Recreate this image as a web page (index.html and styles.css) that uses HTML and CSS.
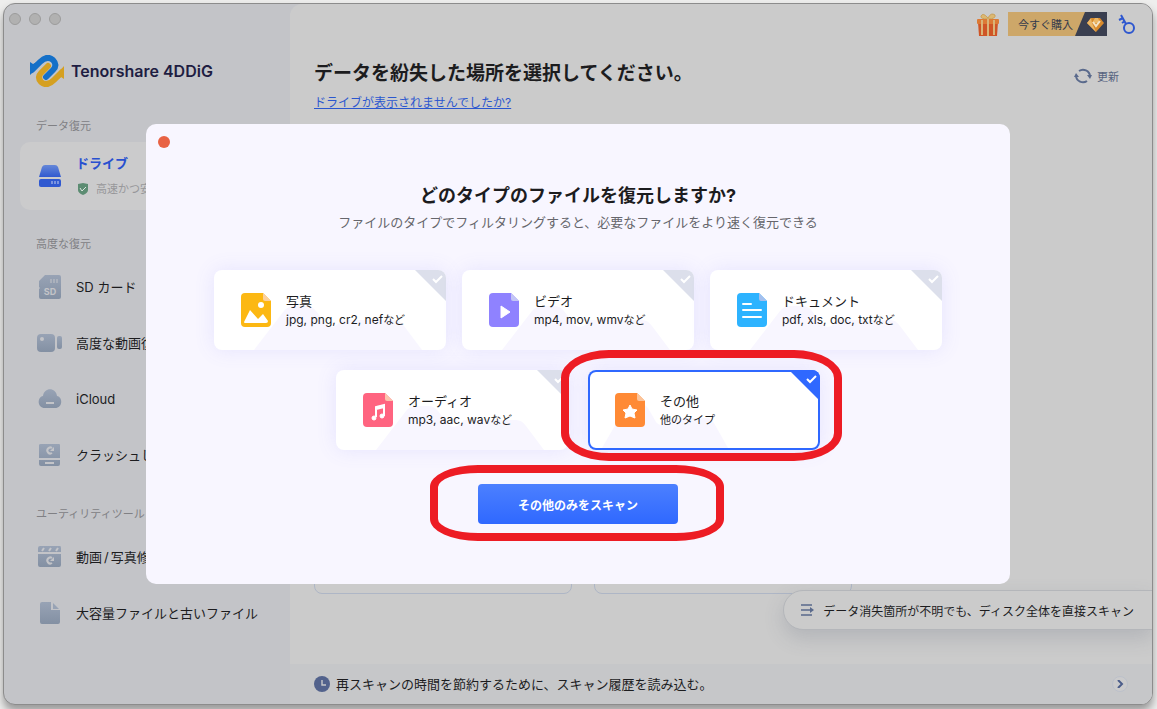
FILE: index.html
```html
<!DOCTYPE html>
<html lang="ja">

<head>

    <meta charset="utf-8">
    <meta name="viewport" content="width=device-width, initial-scale=1.0">

    <title>Tenorshare 4DDiG</title>
    <link rel="stylesheet" href="styles.css">

</head>

<body>

<!-- 共通パーツ -->
<svg class="defs" width="0" height="0" aria-hidden="true">
    <defs>
        <linearGradient id="grey" x1="0" y1="0" x2="0" y2="1">
            <stop offset="0" stop-color="#98a3b5"/>
            <stop offset="1" stop-color="#8390a3"/>
        </linearGradient>
        <linearGradient id="blue" x1="0" y1="0" x2="0" y2="1">
            <stop offset="0" stop-color="#6587d8"/>
            <stop offset="1" stop-color="#3059d0"/>
        </linearGradient>
    </defs>
    <symbol id="hill" viewBox="0 0 168 48" preserveAspectRatio="none">
        <path d="M0 48L30 9Q34 4 40 4H52Q58 4 62 9L72 22Q78 28 84 22L88 18H140Q146 18 150 24L168 48Z" fill="#f8f6ff"/>
    </symbol>
    <symbol id="tick" viewBox="0 0 11 9">
        <path d="M1 4L4 7L10 1" fill="none" stroke="#fff" stroke-width="2"/>
    </symbol>
</svg>

<div class="window">

    <aside class="sidebar">
        <div class="lights">
            <span></span><span></span><span></span>
        </div>
        <div class="brand">
            <svg width="34" height="32" viewBox="0 0 34 32" fill="none" stroke-width="6">
                <path d="M0 7L3 9L7 7V13L0 20Z" fill="#1570c8"/>
                <path d="M2 15L10 7Q17 0 23 5Q28 10 23 15L16 22" stroke="#1570c8" stroke-linecap="round"/>
                <path d="M34 11L27 19V25L31 22L34 24Z" fill="#d5a021"/>
                <path d="M32 17L24 25Q17 32 11 27Q7 22 11 18L18 11" stroke="#d5a021" stroke-linecap="round"/>
            </svg>
            <span>Tenorshare 4DDiG</span>
        </div>

        <nav>
            <div class="group">
                <h2>データ復元</h2>
                <a class="item active" href="#">
                    <svg width="28" height="24" viewBox="0 0 28 24">
                        <path d="M7 1H17Q19 1 20 3L23 13H1L4 3Q5 1 7 1Z" fill="url(#blue)" transform="translate(2 0)"/>
                        <rect x="3" y="15" width="22" height="8" rx="2" fill="#3059d0"/>
                        <path d="M16 17v3M19 17v3M22 17v3" stroke="#c5d0ef"/>
                    </svg>
                    <span class="texts">
                        <b>ドライブ</b>
                        <small>
                            <svg width="12" height="12" viewBox="0 0 12 12">
                                <path d="M6 0L11 1V7Q11 10 6 12Q1 10 1 7V1Z" fill="#5c8c72"/>
                                <path d="M3 5L5 8L9 4" fill="none" stroke="#dce5df" stroke-width="1"/>
                            </svg>
                            高速かつ安全
                        </small>
                    </span>
                </a>
            </div>

            <div class="group">
                <h2>高度な復元</h2>
                <a class="item" href="#">
                    <svg width="28" height="24" viewBox="0 0 28 24">
                        <path d="M9 0H23Q25 0 25 2V22Q25 24 23 24H5Q3 24 3 22V14L4 13L3 12V6Z" fill="url(#grey)"/>
                        <path d="M15 4v4M18 4v4M21 4v4" stroke="#c3c4c8"/>
                        <text x="14" y="20" class="sd">SD</text>
                    </svg>
                    <span>SD カード</span>
                </a>
                <a class="item" href="#">
                    <svg width="28" height="24" viewBox="0 0 28 24">
                        <rect x="1" y="3" width="18" height="18" rx="4" fill="url(#grey)"/>
                        <rect x="21" y="5" width="5" height="13" rx="2" fill="url(#grey)"/>
                        <circle cx="6" cy="8" r="2" fill="#c3c4c8"/>
                    </svg>
                    <span>高度な動画復元</span>
                </a>
                <a class="item" href="#">
                    <svg width="28" height="24" viewBox="0 0 28 24">
                        <path d="M9 21C1 21 1 10 7 9C8 0 20 0 21 9C27 10 27 21 19 21Z" fill="url(#grey)"/>
                        <path d="M10 16h8" stroke="#c3c4c8" stroke-width="2"/>
                    </svg>
                    <span>iCloud</span>
                </a>
                <a class="item" href="#">
                    <svg width="28" height="24" viewBox="0 0 28 24">
                        <path d="M5 1H23Q24 1 24 2V15H3V2Q3 1 5 1ZM3 17H24V21Q24 23 22 23H5Q3 23 3 21Z" fill="url(#grey)"/>
                        <path d="M16 5A3 3 0 1 0 16 10" fill="none" stroke="#c3c4c8" stroke-width="2"/>
                        <path d="M14 8h4v-4z" fill="#c3c4c8"/>
                        <path d="M9 20h9" stroke="#c3c4c8" stroke-width="2"/>
                    </svg>
                    <span>クラッシュした PC</span>
                </a>
            </div>

            <div class="group">
                <h2>ユーティリティツール</h2>
                <a class="item" href="#">
                    <svg width="28" height="24" viewBox="0 0 28 24">
                        <path d="M4 1H24Q25 1 25 3V7H2V3Q2 1 4 1ZM2 9H25V20Q25 22 23 22H4Q2 22 2 20Z" fill="url(#grey)"/>
                        <path d="M6 6l2-3M13 6l2-3M20 6l2-3" stroke="#c3c4c8" stroke-width="2"/>
                        <path d="M16 13A3 3 0 1 0 16 18" fill="none" stroke="#c3c4c8" stroke-width="2"/>
                        <path d="M14 16h4v-4z" fill="#c3c4c8"/>
                    </svg>
                    <span>動画<i>/</i>写真修復</span>
                </a>
                <a class="item" href="#">
                    <svg width="28" height="24" viewBox="0 0 28 24">
                        <path d="M6 1H15V9H24V21Q24 23 22 23H6Q4 23 4 21V3Q4 1 6 1Z" fill="url(#grey)"/>
                        <path d="M17 2L23 8H17Z" fill="#98a3b5"/>
                    </svg>
                    <span>大容量ファイルと古いファイル</span>
                </a>
            </div>
        </nav>
    </aside>

    <main class="main">
        <header class="topbar">
            <svg width="24" height="24" viewBox="0 0 24 24">
                <path d="M12 7Q4 7 5 4Q7 0 12 6Q15 0 19 3Q20 7 12 7Z" fill="#dcb872" stroke="#c9a05a"/>
                <path d="M2 10H22L21 24H3Z" fill="#cf5526"/>
                <rect x="1" y="7" width="22" height="5" rx="1" fill="#dc7a35"/>
                <path d="M6 8V23M12 7V24M18 8V23" stroke="#d9b478" stroke-width="2"/>
            </svg>
            <button type="button" class="buy">
                <span>今すぐ購入</span>
                <svg width="32" height="24" viewBox="0 0 32 24">
                    <path d="M10 0H32V24H0Z" fill="#3a3f50"/>
                    <path d="M16 6H25L29 11L21 20L12 11Z" fill="#d98a2b"/>
                    <path d="M16 6L17 11L21 20L12 11ZM20 6H23L25 11H17Z" fill="#ecb765"/>
                    <path d="M18 10L21 14L25 9" fill="none" stroke="#f3e3c4" stroke-width="2"/>
                </svg>
            </button>
            <button type="button" class="key" aria-label="登録">
                <svg width="18" height="24" viewBox="0 0 18 24" fill="none" stroke="#2e57cf" stroke-width="2">
                    <circle cx="11" cy="16" r="5"/>
                    <path d="M8 12L3 3M1 8L5 6M4 11L7 9"/>
                </svg>
            </button>
        </header>

        <section class="content">
            <div class="heading">
                <div>
                    <h1>データを紛失した場所を選択してください。</h1>
                    <a href="#">ドライブが表示されませんでしたか?</a>
                </div>
                <button type="button" class="refresh">
                    <svg width="18" height="16" viewBox="0 0 18 16" fill="none" stroke="#5a6a8c" stroke-width="2">
                        <path d="M5 3A7 7 0 0 1 16 8M13 13A7 7 0 0 1 2 8"/>
                        <path d="M0 9L2 5L5 9ZM13 7L16 11L18 7Z" fill="#5a6a8c" stroke="none"/>
                    </svg>
                    更新
                </button>
            </div>
            <div class="drives">
                <div class="drive"></div>
                <div class="drive"></div>
            </div>
            <button type="button" class="pill">
                <svg width="14" height="14" viewBox="0 0 14 14" fill="none" stroke="#5a6a8c" stroke-width="1">
                    <path d="M1 2H12M1 7H12M1 12H12" stroke-width="1.4"/>
                    <path d="M10 4L14 7L10 10Z" fill="#5a6a8c" stroke="none"/>
                </svg>
                データ消失箇所が不明でも、ディスク全体を直接スキャン
            </button>
        </section>

        <footer class="history">
            <svg width="16" height="16" viewBox="0 0 16 16">
                <circle cx="8" cy="8" r="8" fill="#52628c"/>
                <path d="M8 4V9H12" fill="none" stroke="#c6c7c9" stroke-width="1.4"/>
            </svg>
            <span>再スキャンの時間を節約するために、スキャン履歴を読み込む。</span>
            <button type="button" aria-label="開く">
                <svg width="8" height="8" viewBox="0 0 8 8">
                    <path d="M2 0L6 4L2 8" fill="none" stroke="#4b5d8a" stroke-width="2"/>
                </svg>
            </button>
        </footer>
    </main>

    <div class="overlay">
        <form class="modal" role="dialog" aria-labelledby="modal-title">
            <button type="button" class="close" aria-label="閉じる"></button>
            <h2 id="modal-title">どのタイプのファイルを復元しますか?</h2>
            <p>ファイルのタイプでフィルタリングすると、必要なファイルをより速く復元できる</p>

            <div class="types">
                <label class="type">
                    <svg class="hill"><use href="#hill"/></svg>
                    <svg class="file" width="30" height="34" viewBox="0 0 30 34">
                        <path d="M4 0H22L30 8V30Q30 34 26 34H4Q0 34 0 30V4Q0 0 4 0Z" fill="#fcb813"/>
                        <path d="M22 0L30 8H24Q22 8 22 6Z" fill="#fbd0a0"/>
                        <circle cx="20" cy="12" r="3" fill="#fff"/>
                        <path d="M3 29L9 17L17 26L22 21L27 28Q27 30 25 30H4Q3 30 3 29Z" fill="#fff"/>
                    </svg>
                    <span class="name"><b>写真</b><small>jpg, png, cr2, nef<i>など</i></small></span>
                    <input type="checkbox"><svg class="tick"><use href="#tick"/></svg>
                </label>
                <label class="type">
                    <svg class="hill"><use href="#hill"/></svg>
                    <svg class="file" width="30" height="34" viewBox="0 0 30 34">
                        <path d="M4 0H22L30 8V30Q30 34 26 34H4Q0 34 0 30V4Q0 0 4 0Z" fill="#8f82ff"/>
                        <path d="M22 0L30 8H24Q22 8 22 6Z" fill="#c3c5f5"/>
                        <path d="M12 13L21 19L12 25Z" fill="#fff" stroke="#fff" stroke-width="1" stroke-linejoin="round"/>
                    </svg>
                    <span class="name"><b>ビデオ</b><small>mp4, mov, wmv<i>など</i></small></span>
                    <input type="checkbox"><svg class="tick"><use href="#tick"/></svg>
                </label>
                <label class="type">
                    <svg class="hill"><use href="#hill"/></svg>
                    <svg class="file" width="30" height="34" viewBox="0 0 30 34">
                        <path d="M4 0H22L30 8V30Q30 34 26 34H4Q0 34 0 30V4Q0 0 4 0Z" fill="#2db3ff"/>
                        <path d="M22 0L30 8H24Q22 8 22 6Z" fill="#a5bfed"/>
                        <path d="M6 11H14M6 17H24M6 24H24" stroke="#fff" stroke-width="2" stroke-linecap="round"/>
                    </svg>
                    <span class="name"><b>ドキュメント</b><small>pdf, xls, doc, txt<i>など</i></small></span>
                    <input type="checkbox"><svg class="tick"><use href="#tick"/></svg>
                </label>
            </div>
            <div class="types last">
                <label class="type">
                    <svg class="hill"><use href="#hill"/></svg>
                    <svg class="file" width="30" height="34" viewBox="0 0 30 34">
                        <path d="M4 0H22L30 8V30Q30 34 26 34H4Q0 34 0 30V4Q0 0 4 0Z" fill="#ff6480"/>
                        <path d="M22 0L30 8H24Q22 8 22 6Z" fill="#fcc4ad"/>
                        <path d="M13 24V14L21 12V23M13 16L21 14" fill="none" stroke="#fff" stroke-width="2"/>
                        <circle cx="11" cy="25" r="2" fill="#fff" stroke="#fff"/>
                        <circle cx="19" cy="23" r="2" fill="#fff" stroke="#fff"/>
                    </svg>
                    <span class="name"><b>オーディオ</b><small>mp3, aac, wav<i>など</i></small></span>
                    <input type="checkbox"><svg class="tick"><use href="#tick"/></svg>
                </label>
                <label class="type selected">
                    <svg class="hill"><use href="#hill"/></svg>
                    <svg class="file" width="30" height="34" viewBox="0 0 30 34">
                        <path d="M4 0H22L30 8V30Q30 34 26 34H4Q0 34 0 30V4Q0 0 4 0Z" fill="#ff8a35"/>
                        <path d="M22 0L30 8H24Q22 8 22 6Z" fill="#fcc49a"/>
                        <path d="M15 12L17 16L22 17L19 20L20 25L15 23L10 25L11 20L8 17L13 16Z" fill="#fff" stroke="#fff" stroke-linejoin="round"/>
                    </svg>
                    <span class="name"><b>その他</b><small><i>他のタイプ</i></small></span>
                    <input type="checkbox" checked><svg class="tick"><use href="#tick"/></svg>
                    <span class="ring"></span>
                </label>
            </div>

            <div class="action">
                <button type="submit">その他のみをスキャン</button>
                <span class="ring"></span>
            </div>
        </form>
    </div>

</div>

</body>

</html>
```

FILE: styles.css
```css
*{
    box-sizing:border-box;
}
body{
    margin:0;
    min-height:100vh;
    padding:3px 4px 4px 3px;
    display:flex;
    overflow:hidden;
    background:#eeeeed;
    font-family:Inter, "Noto Sans CJK JP", sans-serif;
    font-size:13px;
    line-height:20px;
    color:#1c1c1e;
}
h1, h2, p{
    margin:0;
}
button{
    border:0;
    padding:0;
    background:none;
    font-family:inherit;
    color:inherit;
    cursor:pointer;
}
i{
    font-style:normal;
}
svg{
    display:block;
    flex:none;
}
.defs{
    position:absolute;
}
.window{
    position:relative;
    flex:1;
    display:flex;
    overflow:hidden;
    border:1px solid #8c8c8c;
    border-radius:12px;
    background:#c3c4c8;
    box-shadow:0 6px 8px #999;
}

/* サイドバー */
.sidebar{
    width:286px;
    flex:none;
    white-space:nowrap;
}
.lights{
    display:flex;
    gap:8px;
    padding:9px 5px;
}
.lights span{
    width:12px;
    height:12px;
    border:1px solid #9c9c9c;
    border-radius:50%;
    background:#b1b1b1;
}
.brand{
    display:flex;
    align-items:center;
    gap:7px;
    height:32px;
    margin:21px 0 31px 26px;
    font-size:16px;
    font-weight:600;
    color:#1e1d42;
}
.group{
    margin-bottom:23px;
}
.group h2{
    margin:0 0 7px 32px;
    font-size:11px;
    line-height:16px;
    font-weight:400;
    color:#808084;
}
.item{
    display:flex;
    align-items:center;
    gap:12px;
    height:56px;
    padding-left:32px;
    color:inherit;
    text-decoration:none;
}
.item i{
    margin:0 2px;
}
.item.active{
    height:68px;
    margin:8px 16px 26px;
    padding-left:16px;
    border-radius:10px;
    background:#cbcbcc;
}
.texts b{
    display:block;
    margin-bottom:6px;
    color:#2850d0;
}
.texts small{
    display:flex;
    align-items:center;
    gap:7px;
    padding-left:1px;
    font-size:11px;
    color:#97979a;
}
.sd{
    font-size:9px;
    font-weight:700;
    text-anchor:middle;
    fill:#c3c4c8;
}

/* メイン */
.main{
    flex:1;
    display:flex;
    flex-direction:column;
    border-top-left-radius:12px;
    background:#cbcbcb;
}
.topbar{
    display:flex;
    justify-content:flex-end;
    padding:8px 16px 0 0;
}
.buy{
    display:flex;
    align-items:center;
    margin:0 11px 0 8px;
    padding-left:10px;
    background:#cda769;
    font-size:11px;
    color:#333a4c;
}
.buy svg{
    margin-left:2px;
}
.content{
    position:relative;
    flex:1;
    display:flex;
    flex-direction:column;
    padding:26px 33px 70px 24px;
}
.heading{
    display:flex;
    justify-content:space-between;
    align-items:flex-start;
    margin-bottom:30px;
}
.heading h1{
    font-size:19px;
    line-height:24px;
    margin-bottom:9px;
}
.heading a{
    display:block;
    font-size:12px;
    line-height:16px;
    color:#2b57cf;
}
.refresh{
    display:flex;
    align-items:center;
    gap:5px;
    height:28px;
    font-size:11px;
    color:#56637f;
}
.drives{
    flex:1;
    display:grid;
    grid-template-columns:258px 258px;
    gap:22px;
}
.drive{
    border:1px solid #aeb6c6;
    border-radius:8px;
}
.pill{
    position:absolute;
    right:-1px;
    bottom:34px;
    display:flex;
    align-items:center;
    gap:9px;
    height:40px;
    padding:0 18px 0 16px;
    border:1px solid #b4b6ba;
    border-radius:20px 0 0 20px;
    background:#cbcbcb;
    box-shadow:0 8px 20px rgba(80, 90, 110, .2);
    font-size:12px;
}
.history{
    display:flex;
    align-items:center;
    gap:6px;
    height:40px;
    padding:0 24px;
    background:#c6c7c9;
}
.history button{
    display:flex;
    align-items:center;
    justify-content:center;
    width:16px;
    height:16px;
    margin-left:auto;
    border:1px solid #bcc0ca;
    border-radius:50%;
    background:#cbcbcc;
}

/* ダイアログ */
.overlay{
    position:absolute;
    inset:0;
    display:flex;
    align-items:center;
    justify-content:center;
}
.modal{
    position:relative;
    width:864px;
    padding:60px 0;
    border-radius:10px;
    background:#f8f6ff;
    text-align:center;
}
.close{
    position:absolute;
    top:12px;
    left:12px;
    width:12px;
    height:12px;
    border-radius:50%;
    background:#e86244;
}
.modal h2{
    font-size:18px;
    line-height:24px;
    margin-bottom:4px;
}
.modal p{
    color:#66666c;
}
.types{
    display:flex;
    justify-content:center;
    gap:16px;
    margin-top:38px;
}
.types.last{
    gap:20px;
    margin-top:20px;
}
.type{
    position:relative;
    display:flex;
    align-items:center;
    gap:15px;
    width:232px;
    height:80px;
    padding-left:27px;
    border-radius:8px;
    background:#fff;
    box-shadow:0 0 20px rgba(110, 110, 250, .13);
    text-align:left;
}
.type.selected{
    box-shadow:inset 0 0 0 2px #2f68ff, 0 0 20px rgba(110, 110, 250, .13);
}
.hill{
    position:absolute;
    left:40px;
    bottom:0;
    width:168px;
    height:48px;
}
.selected .hill{
    left:14px;
    bottom:2px;
    width:126px;
}
.file, .name{
    position:relative;
}
.name b{
    display:block;
    font-weight:400;
    line-height:20px;
}
.name small{
    display:block;
    font-size:12px;
    line-height:18px;
}
.name i{
    font-size:11px;
}
.type input{
    appearance:none;
    position:absolute;
    top:0;
    right:0;
    width:31px;
    height:31px;
    margin:0;
    border-top-right-radius:8px;
    background:#dcdfeb;
    clip-path:polygon(0 0, 100% 0, 100% 100%);
}
.type input:checked{
    background:#2f68ff;
}
.tick{
    position:absolute;
    top:5px;
    right:3px;
    width:11px;
    height:9px;
}
.action{
    position:relative;
    width:200px;
    margin:34px auto 0;
}
.action button{
    width:100%;
    height:40px;
    border-radius:4px;
    background:linear-gradient(#4c80ff, #2f68ff);
    font-size:12px;
    font-weight:600;
    color:#fff;
}

/* 赤い囲み */
.ring{
    position:absolute;
    z-index:1;
    inset:-20px -22px -11px -27px;
    border:8px solid #ed1c24;
    border-radius:48px / 28px;
    pointer-events:none;
}
.action .ring{
    inset:-19px -46px -17px -48px;
    border-radius:48px / 22px;
}
```
